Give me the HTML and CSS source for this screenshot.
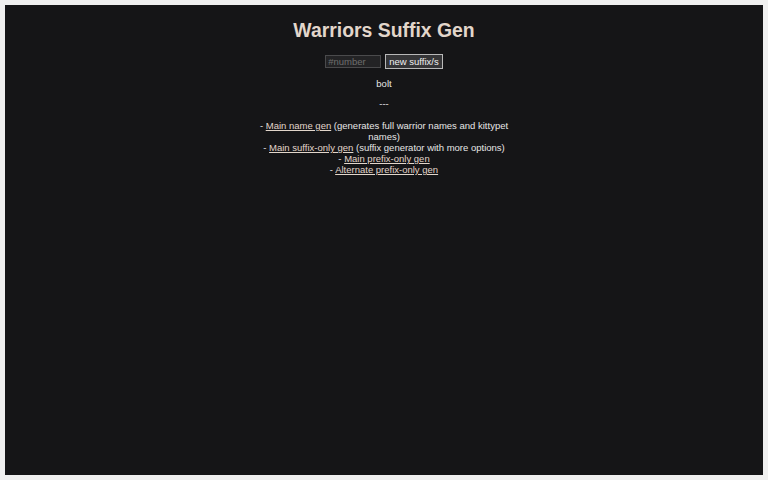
FILE: index.html
```html
<!DOCTYPE html>
<html>
<head>
<meta charset="utf-8">
<title>Warriors Suffix Gen</title>
<link rel="stylesheet" href="styles.css">
</head>
<body>
<div class="page">
  <h1 class="title">Warriors Suffix Gen</h1>
  <div class="controls">
    <input class="num" type="text" placeholder="#number">
    <button class="gen">new suffix/s</button>
  </div>
  <p class="result">bolt</p>
  <p class="sep">---</p>
  <div class="links">
    - <a href="#">Main name gen</a> (generates full warrior names and kittypet names)<br>
    - <a href="#">Main suffix-only gen</a> (suffix generator with more options)<br>
    - <a href="#">Main prefix-only gen</a><br>
    - <a href="#">Alternate prefix-only gen</a>
  </div>
</div>
</body>
</html>
```
FILE: styles.css
```css
html {
  background: #f0f0f0;
}
body {
  margin: 5px;
  height: 470px;
  background: #151517;
  color: #e6e6e6;
  font-family: "Liberation Sans", Arial, sans-serif;
  font-size: 9.5px;
  overflow: hidden;
}
.page {
  display: flex;
  flex-direction: column;
  align-items: center;
  padding-top: 14px;
}
.title {
  margin: 0 0 12px;
  font-size: 19.4px;
  font-weight: bold;
  color: #e2d6cb;
}
.controls {
  display: flex;
  align-items: center;
  gap: 4px;
}
.num {
  width: 50px;
  height: 11px;
  padding: 0 2px;
  border: 1px solid #4a4a4c;
  background: #232325;
  color: #ddd;
  font-family: inherit;
  font-size: 9.5px;
}
.num::placeholder {
  color: #6e6e6e;
}
.gen {
  height: 15px;
  padding: 0 3px;
  border: 1px solid #b8b8b8;
  background: #353537;
  color: #f0f0f0;
  font-family: inherit;
  font-size: 9.5px;
}
.result {
  margin: 9px 0 0;
}
.sep {
  margin: 9px 0 0;
}
.links {
  margin-top: 11px;
  width: 252px;
  text-align: center;
  line-height: 11px;
}
.links a {
  color: #e2d6cb;
}
```
